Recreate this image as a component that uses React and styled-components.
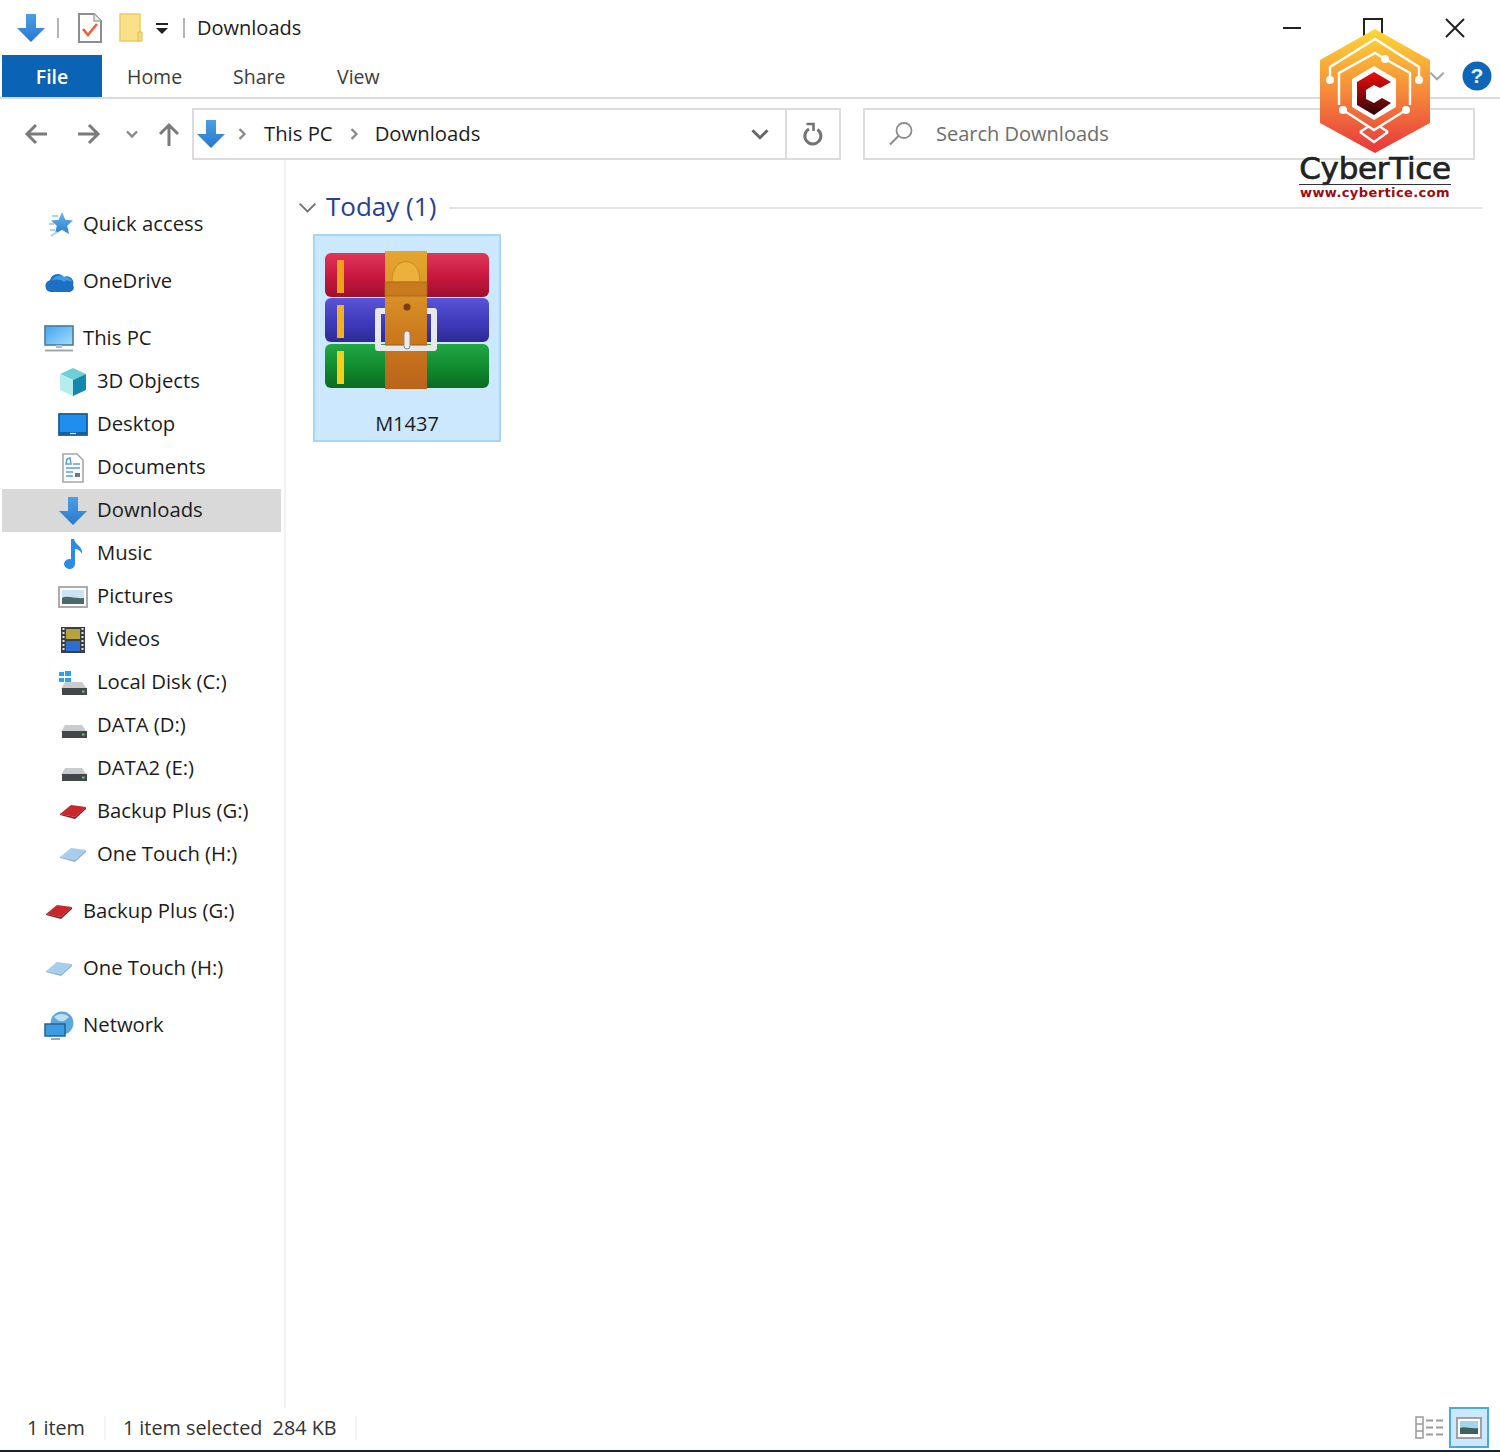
import styled, { createGlobalStyle } from "styled-components";
import { useId } from "react";

const GlobalStyle = createGlobalStyle`
  html, body { margin: 0; padding: 0; background: #fff; }
  body { font-family: "Open Sans", "Noto Sans", "Liberation Sans", sans-serif; color: #1c1c1c; }
`;

const DownArrow = ({ size = 30 }) => {
  const id = useId();
  return (
    <svg width={size} height={size} viewBox="0 0 30 30">
      <defs>
        <linearGradient id={id} x1="0" y1="0" x2="0" y2="1">
          <stop offset="0" stopColor="#4a9fe8" />
          <stop offset="1" stopColor="#2a78cc" />
        </linearGradient>
      </defs>
      <path d="M10 1h10v14h9L15 29 1 15h9z" fill={`url(#${id})`} />
    </svg>
  );
};

const TaskDoc = () => (
  <svg width="26" height="30" viewBox="0 0 26 30">
    <path d="M2 1h15l7 7v21H2z" fill="#fff" stroke="#8d8d8d" strokeWidth="2" />
    <path d="M17 1v7h7" fill="#eee" stroke="#a5a5a5" strokeWidth="1.5" />
    <path d="M6 16l5 6 9-11" fill="none" stroke="#e8603c" strokeWidth="2.6" />
  </svg>
);

const QuickFolder = () => (
  <svg width="24" height="30" viewBox="0 0 24 30">
    <path d="M1 1h20v27H1z" fill="#fbe08a" stroke="#eecb5d" strokeWidth="1.5" />
    <path d="M19 19h4v9h-4z" fill="#f6d978" stroke="#e3bd4c" strokeWidth="1" />
  </svg>
);

const DropMark = () => (
  <svg width="14" height="14" viewBox="0 0 14 14">
    <path d="M1 2h12v2H1z" fill="#222" />
    <path d="M1 7h12l-6 6z" fill="#222" />
  </svg>
);

const NavArrow = ({ dir }) => (
  <svg width="24" height="24" viewBox="0 0 24 24" fill="none" stroke="#7b7b7b" strokeWidth="3">
    {dir === "left" && <path d="M23 12H3M12 3l-9 9 9 9" />}
    {dir === "right" && <path d="M1 12h20M12 3l9 9-9 9" />}
    {dir === "up" && <path d="M12 24V3M3 12l9-9 9 9" />}
  </svg>
);

const Chevron = ({ size = 12, color = "#8a8a8a", width = 2.4, dir = "down" }) => (
  <svg width={size} height={size} viewBox="0 0 12 12" fill="none" stroke={color} strokeWidth={width}>
    {dir === "down" ? <path d="M1 3.5l5 5 5-5" /> : <path d="M3.5 1l5 5-5 5" />}
  </svg>
);

const RefreshIcon = () => (
  <svg width="22" height="24" viewBox="0 0 22 24" fill="none" stroke="#737373" strokeWidth="3">
    <path d="M15.5 7.500A8 8 0 1 1 7 7" />
    <path d="M4.500 2h7v7" strokeWidth="2.600" />
  </svg>
);

const SearchIcon = () => (
  <svg width="26" height="26" viewBox="0 0 26 26" fill="none" stroke="#8d8d8d" strokeWidth="1.8">
    <circle cx="16" cy="9.5" r="7.5" />
    <path d="M10.5 15L2 23.5" strokeWidth="2.2" />
  </svg>
);

const QuickStar = () => {
  const id = useId();
  return (
    <svg width="28" height="28" viewBox="0 0 28 28">
      <defs>
        <linearGradient id={id} x1="0" y1="0" x2="0" y2="1">
          <stop offset="0" stopColor="#6ab3ee" />
          <stop offset="1" stopColor="#2b7fd0" />
        </linearGradient>
      </defs>
      <path d="M17 1l3.300 7.800 7.700.8-5.800 5.200 1.800 8.200L17 18.800 10 23l1.800-8.200L6 9.600l7.700-.8z" fill={`url(#${id})`} />
      <path d="M7 5h6M4 13h5M5 19h5M6 25l6-4" stroke="#a9d3f3" strokeWidth="1.800" />
    </svg>
  );
};

const CloudIcon = () => (
  <svg width="30" height="22" viewBox="0 0 30 22">
    <path d="M7 21a6 6 0 0 1-1-11.8A8 8 0 0 1 20 6a6.5 6.5 0 0 1 9 8 4.5 4.5 0 0 1-3 7z" fill="#1d6fc4" />
    <path d="M8 9.5a8 8 0 0 1 12-3.5 6.5 6.5 0 0 1 8 5c-3-2-6-2-8 0-4-3-9-3-12-1.500z" fill="#3f9be3" />
  </svg>
);

const MonitorIcon = () => {
  const id = useId();
  return (
    <svg width="30" height="28" viewBox="0 0 30 28">
      <defs>
        <linearGradient id={id} x1="0" y1="0" x2="1" y2="1">
          <stop offset="0" stopColor="#3fa4f0" />
          <stop offset="1" stopColor="#a6defc" />
        </linearGradient>
      </defs>
      <rect x="1" y="1" width="28" height="19" fill={`url(#${id})`} stroke="#4b7a9e" strokeWidth="1.600" />
      <path d="M12 20h6v3h-6z" fill="#b7bcc2" />
      <path d="M1 25.500h28" stroke="#9aa0a6" strokeWidth="1.800" />
    </svg>
  );
};

const CubeIcon = () => (
  <svg width="30" height="30" viewBox="0 0 30 30">
    <path d="M15 1l13 6-13 6L2 7z" fill="#6fcfd8" />
    <path d="M2 7l13 6v16L2 23z" fill="#b5ecef" />
    <path d="M28 7L15 13v16l13-6z" fill="#1488ae" />
  </svg>
);

const DesktopIcon = () => (
  <svg width="30" height="24" viewBox="0 0 30 24">
    <rect x="1" y="1" width="28" height="21" fill="#1e8fee" stroke="#1a5f96" strokeWidth="1.800" />
    <path d="M1 19h28v3H1z" fill="#1a5f96" />
    <path d="M12 20.500h6" stroke="#cfe7f7" strokeWidth="1.200" />
  </svg>
);

const DocumentIcon = () => (
  <svg width="24" height="30" viewBox="0 0 24 30" fill="none">
    <path d="M2 1h14l6 6v22H2z" fill="#fff" stroke="#a6a6a6" strokeWidth="1.600" />
    <path d="M6 6l3-1 1 6H5zM12 11h7M5 15h14M5 19h7M5 23h7" stroke="#5b9fd6" strokeWidth="1.500" />
    <path d="M14 20h5v4h-5z" fill="#6a7a86" />
  </svg>
);

const NoteIcon = () => (
  <svg width="24" height="32" viewBox="0 0 24 32">
    <path d="M10 1h3c1 6 9 7 8 15-1-3-4-5-7-5v15a5.500 5 0 1 1-4-4.800z" fill="#2a8ce6" />
  </svg>
);

const PictureIcon = () => (
  <svg width="30" height="24" viewBox="0 0 30 24">
    <rect x="1" y="2" width="28" height="20" fill="#fff" stroke="#a3a3a3" strokeWidth="1.800" />
    <rect x="4" y="5" width="22" height="14" fill="#cbe4f4" />
    <path d="M4 13c6-3 12 1 22 0v6H4z" fill="#4a6b68" />
  </svg>
);

const VideoIcon = () => (
  <svg width="26" height="28" viewBox="0 0 26 28">
    <rect x="1" y="1" width="24" height="26" fill="#3a3f45" />
    <rect x="6" y="3" width="14" height="10" fill="#b8a23a" />
    <rect x="6" y="15" width="14" height="10" fill="#2d6fd0" />
    <path d="M2.500 3h2M2.500 7h2M2.500 11h2M2.500 15h2M2.500 19h2M2.500 23h2M21.500 3h2M21.500 7h2M21.500 11h2M21.500 15h2M21.500 19h2M21.500 23h2" stroke="#e3e3e3" strokeWidth="2" />
  </svg>
);

const DiskIcon = ({ windows }) => (
  <svg width="30" height="26" viewBox="0 0 30 26">
    {windows && <path d="M1 2h5v4H1zM7 1h6v5H7zM1 8h5v4H1zM7 8h6v5H7z" fill="#2aa3e8" />}
    <path d="M7 12h17l5 7H3z" fill="#c9cbcd" />
    <rect x="4" y="18" width="25" height="7" fill="#43474a" />
    <rect x="24" y="20.500" width="2.500" height="2" fill="#5fd06a" />
  </svg>
);

const PlusDrive = ({ color, edge }) => (
  <svg width="28" height="16" viewBox="0 0 28 16">
    <path d="M12 1l15 2-11 10L1 10z" fill={color} />
    <path d="M1 10l15 3 11-10v2L16 15 1 11z" fill={edge} />
  </svg>
);

const NetworkIcon = () => (
  <svg width="30" height="30" viewBox="0 0 30 30">
    <circle cx="18" cy="12" r="11.500" fill="#5aa7d9" />
    <path d="M10 6c4-4 11-4 15 0-3 2-4 5-8 4-3 0-5-2-7-4z" fill="#bfe0f2" />
    <rect x="1" y="13" width="20" height="12" fill="#3d9be6" stroke="#23648f" strokeWidth="1.500" />
    <path d="M7 28h9" stroke="#8a949b" strokeWidth="1.600" />
  </svg>
);

const WinRarIcon = () => {
  const id = useId();
  const books = [
    { key: "red", y: 2, top: "#e0365a", mid: "#c7173d", low: "#9e0f2e", tag: "#f0a11c" },
    { key: "blue", y: 47, top: "#5a54d6", mid: "#3f3abb", low: "#2d2a94", tag: "#f0b020" },
    { key: "green", y: 93, top: "#22a845", mid: "#0f8a2e", low: "#0a6a22", tag: "#f4d01c" },
  ];
  return (
    <svg width="166" height="140" viewBox="0 0 166 140">
      <defs>
        <linearGradient id={id} x1="0" y1="0" x2="0" y2="1">
          <stop offset="0" stopColor="#e6a52f" />
          <stop offset="0.22" stopColor="#dd9a2a" />
          <stop offset="0.6" stopColor="#cd7a1e" />
          <stop offset="1" stopColor="#b9641a" />
        </linearGradient>
        {books.map((b) => (
          <linearGradient key={b.key} id={id + b.key} x1="0" y1="0" x2="0" y2="1">
            <stop offset="0" stopColor={b.top} />
            <stop offset="0.55" stopColor={b.mid} />
            <stop offset="1" stopColor={b.low} />
          </linearGradient>
        ))}
      </defs>
      {books.map((b) => (
        <g key={b.key}>
          <rect x="1" y={b.y} width="164" height="44" rx="6" fill={`url(#${id + b.key})`} />
          <rect x="13" y={b.y + 7} width="7" height="33" fill={b.tag} />
        </g>
      ))}
      <path d="M54 60h56v37H54z" fill="none" stroke="#e8e8e8" strokeWidth="6" strokeLinejoin="round" />
      <path d="M61 0h42v138H61z" fill={`url(#${id})`} />
      <path d="M61 31h42v14H61z" fill="#c97a1e" stroke="#a96214" strokeWidth="0.800" />
      <path d="M68 30c0-26 28-26 28 0" fill="#ecb13a" stroke="#c98a22" />
      <circle cx="83" cy="56" r="3.500" fill="#7a3d10" />
      <path d="M54 97h56" stroke="#e8e8e8" strokeWidth="6" />
      <path d="M61 94h42" stroke="#9c5a14" strokeWidth="1.200" />
      <rect x="80" y="80" width="6" height="18" rx="3" fill="#ececec" stroke="#8c8c8c" />
    </svg>
  );
};

const HelpIcon = () => (
  <svg width="30" height="30" viewBox="0 0 30 30">
    <circle cx="15" cy="15" r="14.500" fill="#0f66b8" />
    <text x="15" y="22" textAnchor="middle" fontFamily="Liberation Sans, sans-serif" fontWeight="700" fontSize="21" fill="#e7f2fb">?</text>
  </svg>
);

const DetailsView = () => (
  <svg width="30" height="24" viewBox="0 0 30 24" fill="none" stroke="#9b9b9b">
    <path d="M1 1h7v7H1zM1 8h7v7H1zM1 15h7v7H1z" strokeWidth="1.500" />
    <path d="M11 4.500h7M21 4.500h7M11 11.500h7M21 11.500h7M11 18.500h7M21 18.500h7" strokeWidth="2" />
  </svg>
);

const TilesView = () => (
  <svg width="26" height="22" viewBox="0 0 26 22">
    <rect x="1" y="1" width="24" height="20" fill="#fff" stroke="#9a9a9a" strokeWidth="1.800" />
    <rect x="4" y="4" width="18" height="13" fill="#a5d3ee" />
    <path d="M4 11c5-2 10 1 18 0v6H4z" fill="#3f615e" />
  </svg>
);

const CyberHex = () => {
  const bg = useId();
  const mark = useId();
  return (
    <svg width="110" height="124" viewBox="0 0 110 124">
      <defs>
        <linearGradient id={bg} x1="0" y1="0" x2="0" y2="1">
          <stop offset="0" stopColor="#fdd835" />
          <stop offset="0.5" stopColor="#f58b3a" />
          <stop offset="1" stopColor="#e8353c" />
        </linearGradient>
        <linearGradient id={mark} x1="0" y1="0" x2="0" y2="1">
          <stop offset="0" stopColor="#f20d0d" />
          <stop offset="1" stopColor="#2b0505" />
        </linearGradient>
      </defs>
      <path d="M55 0l55 31v63l-55 30L0 94V31z" fill={`url(#${bg})`} />
      <g fill="none" stroke="#fff" strokeWidth="2.400">
        <path d="M10 51V38l45-28 44 28v13" />
        <path d="M65 30l-10-6-36 20v32M65 30l25 14v32" />
        <path d="M23 81l31 20 32-20M40 103l14 10 14-10M40 103l9-6M68 103l-9-6" />
      </g>
      <g fill="#fff">
        <circle cx="10" cy="51" r="4" />
        <circle cx="99" cy="51" r="4" />
        <circle cx="65" cy="30" r="4" />
        <circle cx="23" cy="81" r="4" />
        <circle cx="86" cy="81" r="4" />
        <path d="M54 37l22 13v28L54 91 32 78V50z" />
      </g>
      <path d="M54 43l17 10-11 6-6-3-8 5v9l8 4 8-5 9 5-17 12-17-10V53z" fill={`url(#${mark})`} />
    </svg>
  );
};

const Window = styled.div`
  position: relative;
  width: 1500px;
  height: 1452px;
  box-sizing: border-box;
  display: flex;
  flex-direction: column;
  overflow: hidden;
  background: #fff;
  border-bottom: 2px solid #14213a;
`;

const TitleBar = styled.div`
  height: 55px;
  flex: none;
  display: flex;
  align-items: center;
  padding-left: 16px;
`;

const QuickSep = styled.span`
  width: 2px;
  height: 20px;
  background: #b5b5b5;
  margin: ${({ $margin }) => $margin};
`;

const QuickSlot = styled.span`
  display: inline-flex;
  margin-right: ${({ $after }) => $after}px;
`;

const TitleText = styled.span`
  font-size: 20px;
  margin-left: 12px;
`;

const WindowControls = styled.div`
  margin-left: auto;
  display: flex;
  align-items: center;
  padding-right: 35px;
  gap: 62px;
`;

const MinimizeMark = styled.span`
  width: 18px;
  height: 2px;
  background: #222;
`;

const MaximizeMark = styled.span`
  width: 16px;
  height: 16px;
  border: 2px solid #222;
`;

const TabBar = styled.div`
  height: 42px;
  flex: none;
  display: flex;
  align-items: center;
  padding-left: 2px;
  padding-right: 8px;
  border-bottom: 2px solid #dadada;
`;

const Tab = styled.div`
  height: 100%;
  display: flex;
  align-items: center;
  font-size: 19.500px;
  width: ${({ $width }) => $width}px;
  padding-left: ${({ $pad }) => $pad || 0}px;
  justify-content: ${({ $active }) => ($active ? "center" : "flex-start")};
  background: ${({ $active }) => ($active ? "#0a63b4" : "transparent")};
  color: ${({ $active }) => ($active ? "#fff" : "#3c3c3c")};
  font-weight: ${({ $active }) => ($active ? 600 : 400)};
  box-sizing: border-box;
`;

const RibbonRight = styled.div`
  margin-left: auto;
  display: flex;
  align-items: center;
  gap: 17px;
`;

const NavRow = styled.div`
  height: 52px;
  flex: none;
  margin-top: 9px;
  display: flex;
  align-items: stretch;
  padding-right: 25px;
`;

const NavButtons = styled.div`
  width: 192px;
  flex: none;
  display: flex;
  align-items: center;
  padding-left: 24px;
  box-sizing: border-box;
`;

const NavSlot = styled.span`
  display: inline-flex;
  margin-right: ${({ $after }) => $after}px;
`;

const AddressBox = styled.div`
  width: 649px;
  flex: none;
  box-sizing: border-box;
  border: 2px solid #dcdcdc;
  display: flex;
  align-items: center;
  padding-left: 2px;
  font-size: 20.300px;
`;

const Crumb = styled.span`
  margin: ${({ $margin }) => $margin};
  display: inline-flex;
`;

const BoxText = styled.span`
  margin-bottom: 2px;
`;

const RefreshCell = styled.div`
  margin-left: auto;
  display: flex;
  align-items: center;
`;

const AddressDrop = styled.span`
  display: inline-flex;
  margin-right: 16px;
`;

const RefreshButton = styled.span`
  width: 52px;
  height: 48px;
  display: flex;
  align-items: center;
  justify-content: center;
  border-left: 2px solid #dcdcdc;
`;

const SearchBox = styled.div`
  margin-left: 22px;
  flex: 1;
  box-sizing: border-box;
  border: 2px solid #dcdcdc;
  display: flex;
  align-items: center;
  padding-left: 23px;
  gap: 22px;
  font-size: 20px;
  color: #6d6d6d;
`;

const Body = styled.div`
  flex: 1;
  min-height: 0;
  display: flex;
`;

const Sidebar = styled.nav`
  width: 286px;
  flex: none;
  box-sizing: border-box;
  border-right: 2px solid #f2f2f2;
  padding: 43px 3px 0 2px;
`;

const NavItem = styled.div`
  height: 43px;
  box-sizing: border-box;
  display: flex;
  align-items: center;
  margin-top: ${({ $group }) => ($group ? 14 : 0)}px;
  padding-left: ${({ $child }) => ($child ? 56 : 42)}px;
  background: ${({ $selected }) => ($selected ? "#d9d9d9" : "transparent")};
  font-size: 20.300px;
`;

const NavIcon = styled.span`
  width: 30px;
  height: 32px;
  flex: none;
  display: flex;
  align-items: center;
  justify-content: center;
  margin-right: 9px;
`;

const NavLabel = styled.span`
  margin-bottom: 4px;
`;

const Content = styled.main`
  flex: 1;
  min-width: 0;
  padding: 29px 17px 0 12px;
`;

const GroupHeader = styled.div`
  display: flex;
  align-items: center;
  height: 36px;
`;

const GroupTitle = styled.span`
  font-size: 26px;
  color: #2a3f8f;
  margin: 0 0 2px 9px;
`;

const GroupRule = styled.span`
  flex: 1;
  height: 2px;
  background: #e4e4e4;
  margin: 2px 0 0 13px;
`;

const FileTile = styled.div`
  margin: 9px 0 0 15px;
  width: 188px;
  height: 208px;
  box-sizing: border-box;
  border: 2px solid #a6d6f8;
  background: #cce8ff;
  display: flex;
  flex-direction: column;
  align-items: center;
  padding-top: 15px;
`;

const FileName = styled.span`
  margin-top: 19px;
  font-size: 20px;
`;

const StatusBar = styled.footer`
  height: 42px;
  flex: none;
  box-sizing: border-box;
  display: flex;
  align-items: center;
  padding: 0 11px 3px 27px;
  font-size: 19.800px;
  color: #333;
`;

const StatusText = styled.span`
  margin-right: ${({ $after }) => $after}px;
`;

const StatusSep = styled.span`
  width: 2px;
  height: 24px;
  background: #f5f5f5;
`;

const ViewSwitch = styled.div`
  margin-left: auto;
  display: flex;
  align-items: center;
  gap: 4px;
`;

const ViewButton = styled.span`
  width: 40px;
  height: 41px;
  box-sizing: border-box;
  display: flex;
  align-items: center;
  justify-content: center;
  border: 2px solid #4aa8dc;
  background: #cce8ff;
`;

const Logo = styled.div`
  position: absolute;
  left: 1285px;
  top: 29px;
  width: 180px;
  display: flex;
  flex-direction: column;
  align-items: center;
`;

const LogoName = styled.div`
  font-family: "DejaVu Sans", sans-serif;
  font-size: 31px;
  line-height: 31px;
  height: 30px;
  color: #222;
  letter-spacing: -0.300px;
  -webkit-text-stroke: 0.7px #222;
`;

const LogoRule = styled.div`
  width: 152px;
  height: 1px;
  background: #333;
  margin-top: 1px;
`;

const LogoUrl = styled.div`
  font-family: "DejaVu Sans", sans-serif;
  font-weight: 700;
  font-size: 13px;
  line-height: 15px;
  letter-spacing: 0.4px;
  color: #9c0b12;
`;

const navItems = [
  { label: "Quick access", icon: <QuickStar />, group: false },
  { label: "OneDrive", icon: <CloudIcon />, group: true },
  { label: "This PC", icon: <MonitorIcon />, group: true },
  { label: "3D Objects", icon: <CubeIcon />, child: true },
  { label: "Desktop", icon: <DesktopIcon />, child: true },
  { label: "Documents", icon: <DocumentIcon />, child: true },
  { label: "Downloads", icon: <DownArrow />, child: true, selected: true },
  { label: "Music", icon: <NoteIcon />, child: true },
  { label: "Pictures", icon: <PictureIcon />, child: true },
  { label: "Videos", icon: <VideoIcon />, child: true },
  { label: "Local Disk (C:)", icon: <DiskIcon windows />, child: true },
  { label: "DATA (D:)", icon: <DiskIcon />, child: true },
  { label: "DATA2 (E:)", icon: <DiskIcon />, child: true },
  { label: "Backup Plus (G:)", icon: <PlusDrive color="#c8282c" edge="#8e1b1f" />, child: true },
  { label: "One Touch (H:)", icon: <PlusDrive color="#a9cdee" edge="#8db4d8" />, child: true },
  { label: "Backup Plus (G:)", icon: <PlusDrive color="#c8282c" edge="#8e1b1f" />, group: true },
  { label: "One Touch (H:)", icon: <PlusDrive color="#a9cdee" edge="#8db4d8" />, group: true },
  { label: "Network", icon: <NetworkIcon />, group: true },
];

export default function App() {
  return (
    <>
      <GlobalStyle />
      <Window>
        <TitleBar>
          <QuickSlot $after={11}><DownArrow /></QuickSlot>
          <QuickSep $margin="0 18px 0 0" />
          <QuickSlot $after={16}><TaskDoc /></QuickSlot>
          <QuickSlot $after={12}><QuickFolder /></QuickSlot>
          <DropMark />
          <QuickSep $margin="0 0 0 14px" />
          <TitleText>Downloads</TitleText>
          <WindowControls>
            <MinimizeMark />
            <MaximizeMark />
            <svg width="20" height="20" viewBox="0 0 20 20" stroke="#222" strokeWidth="2">
              <path d="M1 1l18 18M19 1L1 19" />
            </svg>
          </WindowControls>
        </TitleBar>

        <TabBar>
          <Tab $active $width={100}>File</Tab>
          <Tab $width={106} $pad={25}>Home</Tab>
          <Tab $width={104} $pad={25}>Share</Tab>
          <Tab $width={80} $pad={25}>View</Tab>
          <RibbonRight>
            <Chevron size={16} color="#a8a8a8" width={1.600} />
            <HelpIcon />
          </RibbonRight>
        </TabBar>

        <NavRow>
          <NavButtons>
            <NavSlot $after={29}><NavArrow dir="left" /></NavSlot>
            <NavSlot $after={25}><NavArrow dir="right" /></NavSlot>
            <NavSlot $after={19}><Chevron /></NavSlot>
            <NavArrow dir="up" />
          </NavButtons>
          <AddressBox>
            <DownArrow />
            <Crumb $margin="0 16px 0 10px"><Chevron dir="right" /></Crumb>
            <BoxText>This PC</BoxText>
            <Crumb $margin="0 15px 0 15px"><Chevron dir="right" /></Crumb>
            <BoxText>Downloads</BoxText>
            <RefreshCell>
              <AddressDrop><Chevron size={18} color="#666" width={2} /></AddressDrop>
              <RefreshButton><RefreshIcon /></RefreshButton>
            </RefreshCell>
          </AddressBox>
          <SearchBox>
            <SearchIcon />
            <BoxText>Search Downloads</BoxText>
          </SearchBox>
        </NavRow>

        <Body>
          <Sidebar>
            {navItems.map((item, i) => (
              <NavItem key={i} $child={item.child} $group={item.group} $selected={item.selected}>
                <NavIcon>{item.icon}</NavIcon>
                <NavLabel>{item.label}</NavLabel>
              </NavItem>
            ))}
          </Sidebar>
          <Content>
            <GroupHeader>
              <Chevron size={19} color="#6f6f6f" width={1.100} />
              <GroupTitle>Today (1)</GroupTitle>
              <GroupRule />
            </GroupHeader>
            <FileTile>
              <WinRarIcon />
              <FileName>M1437</FileName>
            </FileTile>
          </Content>
        </Body>

        <StatusBar>
          <StatusText $after={19}>1 item</StatusText>
          <StatusSep />
          <StatusText $after={17} />
          <StatusText $after={18}>1 item selected&nbsp;&nbsp;284 KB</StatusText>
          <StatusSep />
          <ViewSwitch>
            <DetailsView />
            <ViewButton><TilesView /></ViewButton>
          </ViewSwitch>
        </StatusBar>

        <Logo>
          <CyberHex />
          <LogoName>CyberTice</LogoName>
          <LogoRule />
          <LogoUrl>www.cybertice.com</LogoUrl>
        </Logo>
      </Window>
    </>
  );
}
